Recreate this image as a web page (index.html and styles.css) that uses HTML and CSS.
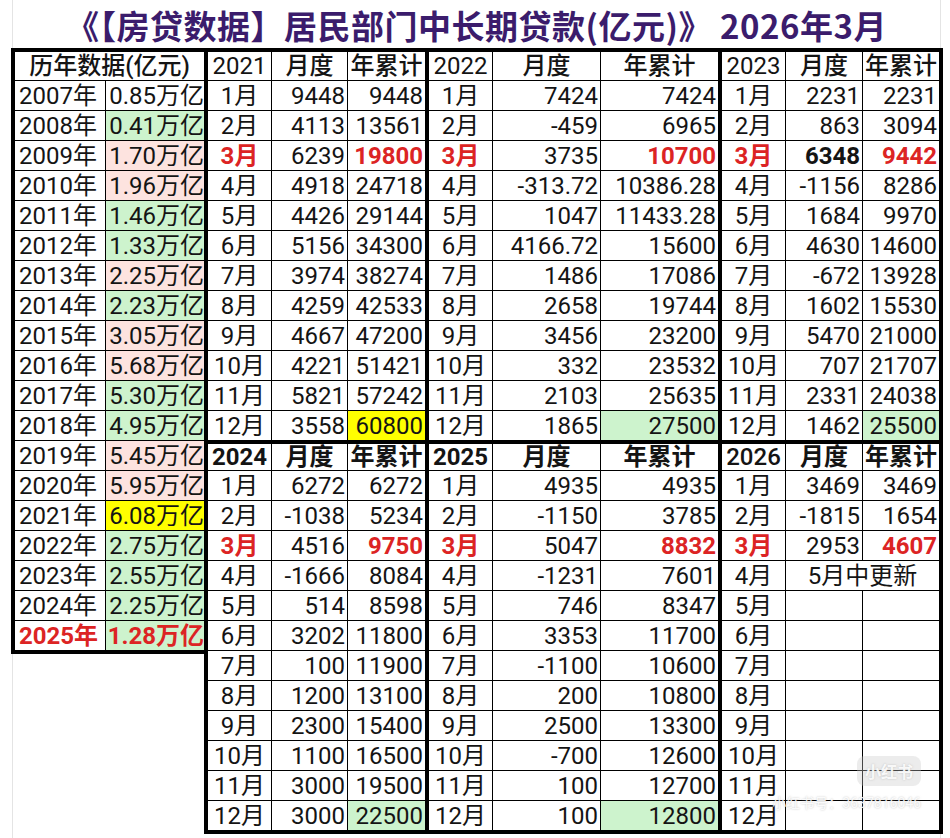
FILE: index.html
```html
<!DOCTYPE html>
<html lang="zh-CN">
<head>
<meta charset="utf-8">
<title>房贷数据</title>
<link rel="stylesheet" href="styles.css">
</head>
<body>
<div class="page">
  <h1 class="title">《【房贷数据】居民部门中长期贷款(亿元)》 2026年3月</h1>
  <div class="tables">
    <div class="hist">
      <div class="c h hh span2">历年数据(亿元)</div>
      <div class="c yr">2007年</div><div class="c v">0.85万亿</div>
      <div class="c yr">2008年</div><div class="c v g">0.41万亿</div>
      <div class="c yr">2009年</div><div class="c v p">1.70万亿</div>
      <div class="c yr">2010年</div><div class="c v p">1.96万亿</div>
      <div class="c yr">2011年</div><div class="c v g">1.46万亿</div>
      <div class="c yr">2012年</div><div class="c v g">1.33万亿</div>
      <div class="c yr">2013年</div><div class="c v p">2.25万亿</div>
      <div class="c yr">2014年</div><div class="c v g">2.23万亿</div>
      <div class="c yr">2015年</div><div class="c v p">3.05万亿</div>
      <div class="c yr">2016年</div><div class="c v p">5.68万亿</div>
      <div class="c yr">2017年</div><div class="c v g">5.30万亿</div>
      <div class="c yr">2018年</div><div class="c v g">4.95万亿</div>
      <div class="c yr">2019年</div><div class="c v p">5.45万亿</div>
      <div class="c yr">2020年</div><div class="c v p">5.95万亿</div>
      <div class="c yr">2021年</div><div class="c v y">6.08万亿</div>
      <div class="c yr">2022年</div><div class="c v g">2.75万亿</div>
      <div class="c yr">2023年</div><div class="c v g">2.55万亿</div>
      <div class="c yr">2024年</div><div class="c v g">2.25万亿</div>
      <div class="c yr r">2025年</div><div class="c v g r">1.28万亿</div>
    </div>
    <div class="right">
      <!-- 2021 -->
      <div class="blk top w1">
        <div class="c h">2021</div><div class="c h hm">月度</div><div class="c h hm">年累计</div>
        <div class="c m">1月</div><div class="c n">9448</div><div class="c n">9448</div>
        <div class="c m">2月</div><div class="c n">4113</div><div class="c n">13561</div>
        <div class="c m r">3月</div><div class="c n">6239</div><div class="c n r">19800</div>
        <div class="c m">4月</div><div class="c n">4918</div><div class="c n">24718</div>
        <div class="c m">5月</div><div class="c n">4426</div><div class="c n">29144</div>
        <div class="c m">6月</div><div class="c n">5156</div><div class="c n">34300</div>
        <div class="c m">7月</div><div class="c n">3974</div><div class="c n">38274</div>
        <div class="c m">8月</div><div class="c n">4259</div><div class="c n">42533</div>
        <div class="c m">9月</div><div class="c n">4667</div><div class="c n">47200</div>
        <div class="c m">10月</div><div class="c n">4221</div><div class="c n">51421</div>
        <div class="c m">11月</div><div class="c n">5821</div><div class="c n">57242</div>
        <div class="c m">12月</div><div class="c n">3558</div><div class="c n y">60800</div>
      </div>
      <!-- 2022 -->
      <div class="blk top w2">
        <div class="c h">2022</div><div class="c h hm">月度</div><div class="c h hm">年累计</div>
        <div class="c m">1月</div><div class="c n">7424</div><div class="c n">7424</div>
        <div class="c m">2月</div><div class="c n">-459</div><div class="c n">6965</div>
        <div class="c m r">3月</div><div class="c n">3735</div><div class="c n r">10700</div>
        <div class="c m">4月</div><div class="c n">-313.72</div><div class="c n">10386.28</div>
        <div class="c m">5月</div><div class="c n">1047</div><div class="c n">11433.28</div>
        <div class="c m">6月</div><div class="c n">4166.72</div><div class="c n">15600</div>
        <div class="c m">7月</div><div class="c n">1486</div><div class="c n">17086</div>
        <div class="c m">8月</div><div class="c n">2658</div><div class="c n">19744</div>
        <div class="c m">9月</div><div class="c n">3456</div><div class="c n">23200</div>
        <div class="c m">10月</div><div class="c n">332</div><div class="c n">23532</div>
        <div class="c m">11月</div><div class="c n">2103</div><div class="c n">25635</div>
        <div class="c m">12月</div><div class="c n">1865</div><div class="c n g">27500</div>
      </div>
      <!-- 2023 -->
      <div class="blk top w3">
        <div class="c h">2023</div><div class="c h hm">月度</div><div class="c h hm">年累计</div>
        <div class="c m">1月</div><div class="c n">2231</div><div class="c n">2231</div>
        <div class="c m">2月</div><div class="c n">863</div><div class="c n">3094</div>
        <div class="c m r">3月</div><div class="c n b">6348</div><div class="c n r">9442</div>
        <div class="c m">4月</div><div class="c n">-1156</div><div class="c n">8286</div>
        <div class="c m">5月</div><div class="c n">1684</div><div class="c n">9970</div>
        <div class="c m">6月</div><div class="c n">4630</div><div class="c n">14600</div>
        <div class="c m">7月</div><div class="c n">-672</div><div class="c n">13928</div>
        <div class="c m">8月</div><div class="c n">1602</div><div class="c n">15530</div>
        <div class="c m">9月</div><div class="c n">5470</div><div class="c n">21000</div>
        <div class="c m">10月</div><div class="c n">707</div><div class="c n">21707</div>
        <div class="c m">11月</div><div class="c n">2331</div><div class="c n">24038</div>
        <div class="c m">12月</div><div class="c n">1462</div><div class="c n g">25500</div>
      </div>
      <!-- 2024 -->
      <div class="blk bot w1">
        <div class="c h b">2024</div><div class="c h b">月度</div><div class="c h b">年累计</div>
        <div class="c m">1月</div><div class="c n">6272</div><div class="c n">6272</div>
        <div class="c m">2月</div><div class="c n">-1038</div><div class="c n">5234</div>
        <div class="c m r">3月</div><div class="c n">4516</div><div class="c n r">9750</div>
        <div class="c m">4月</div><div class="c n">-1666</div><div class="c n">8084</div>
        <div class="c m">5月</div><div class="c n">514</div><div class="c n">8598</div>
        <div class="c m">6月</div><div class="c n">3202</div><div class="c n">11800</div>
        <div class="c m">7月</div><div class="c n">100</div><div class="c n">11900</div>
        <div class="c m">8月</div><div class="c n">1200</div><div class="c n">13100</div>
        <div class="c m">9月</div><div class="c n">2300</div><div class="c n">15400</div>
        <div class="c m">10月</div><div class="c n">1100</div><div class="c n">16500</div>
        <div class="c m">11月</div><div class="c n">3000</div><div class="c n">19500</div>
        <div class="c m">12月</div><div class="c n">3000</div><div class="c n g">22500</div>
      </div>
      <!-- 2025 -->
      <div class="blk bot w2">
        <div class="c h b">2025</div><div class="c h b">月度</div><div class="c h b">年累计</div>
        <div class="c m">1月</div><div class="c n">4935</div><div class="c n">4935</div>
        <div class="c m">2月</div><div class="c n">-1150</div><div class="c n">3785</div>
        <div class="c m r">3月</div><div class="c n">5047</div><div class="c n r">8832</div>
        <div class="c m">4月</div><div class="c n">-1231</div><div class="c n">7601</div>
        <div class="c m">5月</div><div class="c n">746</div><div class="c n">8347</div>
        <div class="c m">6月</div><div class="c n">3353</div><div class="c n">11700</div>
        <div class="c m">7月</div><div class="c n">-1100</div><div class="c n">10600</div>
        <div class="c m">8月</div><div class="c n">200</div><div class="c n">10800</div>
        <div class="c m">9月</div><div class="c n">2500</div><div class="c n">13300</div>
        <div class="c m">10月</div><div class="c n">-700</div><div class="c n">12600</div>
        <div class="c m">11月</div><div class="c n">100</div><div class="c n">12700</div>
        <div class="c m">12月</div><div class="c n">100</div><div class="c n g">12800</div>
      </div>
      <!-- 2026 -->
      <div class="blk bot w3">
        <div class="c h hm">2026</div><div class="c h b">月度</div><div class="c h b">年累计</div>
        <div class="c m">1月</div><div class="c n">3469</div><div class="c n">3469</div>
        <div class="c m">2月</div><div class="c n">-1815</div><div class="c n">1654</div>
        <div class="c m r">3月</div><div class="c n">2953</div><div class="c n r">4607</div>
        <div class="c m">4月</div><div class="c m span2">5月中更新</div>
        <div class="c m">5月</div><div class="c"></div><div class="c"></div>
        <div class="c m">6月</div><div class="c"></div><div class="c"></div>
        <div class="c m">7月</div><div class="c"></div><div class="c"></div>
        <div class="c m">8月</div><div class="c"></div><div class="c"></div>
        <div class="c m">9月</div><div class="c"></div><div class="c"></div>
        <div class="c m">10月</div><div class="c"></div><div class="c"></div>
        <div class="c m">11月</div><div class="c"></div><div class="c"></div>
        <div class="c m">12月</div><div class="c"></div><div class="c"></div>
      </div>
      <div class="wm">
        <span class="wm-logo">小红书</span>
        <span class="wm-id">小红书号：3637816046</span>
      </div>
    </div>
  </div>
</div>
</body>
</html>
```

FILE: styles.css
```css
* { box-sizing: border-box; }

body {
  margin: 0;
  background: #fff;
  color: #141414;
  font-family: Roboto, "Noto Sans CJK SC", sans-serif;
}

.page {
  margin-left: 12px;
  width: 929px;
  min-height: 838px;
  border-left: 1px solid #e4e4e4;
  border-right: 1px solid #e4e4e4;
}

.title {
  margin: 0;
  height: 48px;
  line-height: 50px;
  font-family: "Noto Sans CJK SC", sans-serif;
  font-size: 33px;
  letter-spacing: 0.5px;
  font-weight: 700;
  color: #3b1c6c;
  text-align: center;
  white-space: nowrap;
}

.tables {
  display: flex;
  align-items: flex-start;
  margin-left: -2px;
}

.hist {
  display: grid;
  grid-template-columns: 90px 98px;
  grid-template-rows: 28px repeat(19, 29px);
  gap: 1px;
  background: #000;
  border: 4px solid #000;
  border-right: 0;
}

.right {
  position: relative;
  display: grid;
  grid-template-columns: 217px 289px 217px;
  grid-template-rows: 388px 386px;
  gap: 4px;
  background: #000;
  border: 4px solid #000;
}

.blk {
  display: grid;
  gap: 1px;
  background: #000;
}
.blk.top { grid-template-rows: 28px repeat(12, 29px); }
.blk.bot { grid-template-rows: 26px repeat(12, 29px); }
.w1 { grid-template-columns: 63px 75px 77px; }
.w2 { grid-template-columns: 63px 107px 117px; }
.w3 { grid-template-columns: 63px 76px 76px; }

.c {
  background: #fff;
  display: flex;
  align-items: center;
  font-size: 24px;
  line-height: 1;
  white-space: nowrap;
  padding: 0 2px;
}

.span2 { grid-column: span 2; }

.h { justify-content: center; }
.hh { font-weight: 500; }
.hm { font-weight: 500; }
.b { font-weight: 700; }
.m { justify-content: center; }
.n { justify-content: flex-end; }
.yr { justify-content: flex-start; padding-left: 4px; }
.v { justify-content: flex-end; padding: 0; }

.g { background: #cdf3cd; }
.p { background: #fde3df; }
.y { background: #ffff00; }
.r { color: #dc2424; font-weight: 700; }

.wm {
  position: absolute;
  right: 18px;
  bottom: 18px;
  display: flex;
  flex-direction: column;
  align-items: flex-end;
  gap: 6px;
  pointer-events: none;
}
.wm-logo {
  font-size: 16px;
  font-weight: 700;
  color: rgba(255, 255, 255, 0.9);
  background: rgba(200, 200, 200, 0.35);
  border-radius: 8px;
  padding: 3px 8px;
  text-shadow: 0 0 2px rgba(150, 150, 150, 0.5);
}
.wm-id {
  font-size: 14px;
  color: rgba(255, 255, 255, 0.9);
  text-shadow: 0 0 2px rgba(150, 150, 150, 0.6);
}
```
